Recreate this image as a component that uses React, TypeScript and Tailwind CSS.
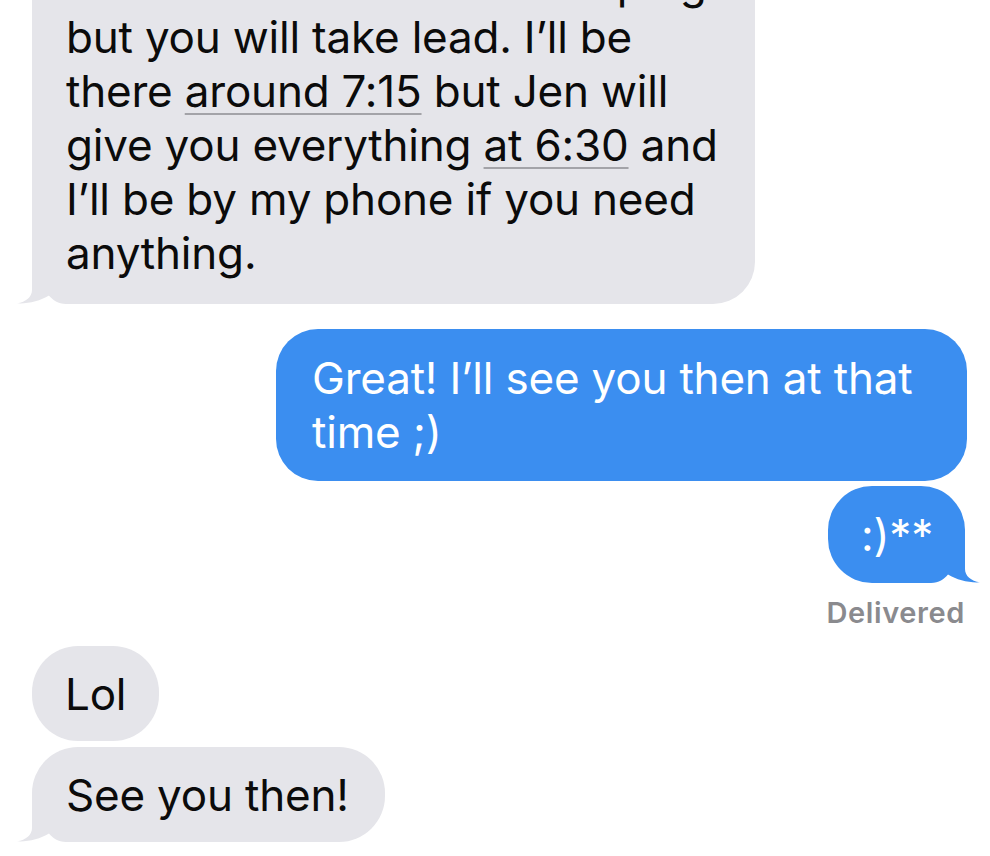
import React from 'react'

const GRAY = '#e5e5ea'
const BLUE = '#3b8ef0'

function Tail({ color, side }: { color: string; side: 'left' | 'right' }) {
  return (
    <svg
      width="64"
      height="48"
      viewBox="0 0 64 48"
      className={
        side === 'left'
          ? 'absolute left-[-16px] bottom-0'
          : 'absolute right-[-16px] bottom-0 scale-x-[-1]'
      }
    >
      <path
        d="M16 0 L16 34 C16 41 10 46 1 47.3 C12 48 24 45 33 39.5 C37 44 42 48 50 48 L64 48 L64 0 Z"
        fill={color}
      />
    </svg>
  )
}

function Link({ children }: { children: React.ReactNode }) {
  return (
    <span className="underline decoration-[#a3a3a8] decoration-[1.5px] underline-offset-[6px]">
      {children}
    </span>
  )
}

export default function App() {
  return (
    <div className="w-[990px] h-[856px] overflow-hidden bg-white font-['Inter','Liberation_Sans',sans-serif] text-[44px] leading-[54px] tracking-[-0.2px] text-[#0b0b0b]">
      <div className="flex flex-col">
        {/* incoming, long (scrolled partly out of view) */}
        <div className="relative self-start ml-[32px] mt-[-66px] w-[723px] rounded-[42px] bg-[#e5e5ea] pl-[34px] pt-[22px] pb-[24px] whitespace-nowrap">
          <Tail color={GRAY} side="left" />
          <span className="relative">
            So Jen and Tom will be helping
            <br />
            but you will take lead. I’ll be
            <br />
            there <Link>around 7:15</Link> but Jen will
            <br />
            give you everything <Link>at 6:30</Link> and
            <br />
            I’ll be by my phone if you need
            <br />
            anything.
          </span>
        </div>

        {/* outgoing */}
        <div className="self-end mr-[23px] mt-[25px] w-[691px] rounded-[42px] bg-[#3b8ef0] pl-[36px] py-[22px] text-white whitespace-nowrap">
          Great! I’ll see you then at that
          <br />
          time ;)
        </div>
        <div className="relative self-end mr-[25px] mt-[5px] rounded-[44px] bg-[#3b8ef0] pl-[33px] pr-[32px] py-[21.5px] text-white">
          <Tail color={BLUE} side="right" />
          <span className="relative">:)**</span>
        </div>
        <div className="self-end mr-[25px] mt-[14px] text-[29px] leading-[32px] font-semibold tracking-[0.6px] text-[#8a8a8e]">
          Delivered
        </div>

        {/* incoming, short */}
        <div className="self-start ml-[32px] mt-[17px] rounded-[46px] bg-[#e5e5ea] px-[33px] py-[20.5px]">
          Lol
        </div>
        <div className="relative self-start ml-[32px] mt-[6px] rounded-[46px] bg-[#e5e5ea] pl-[34px] pr-[36px] py-[20.5px]">
          <Tail color={GRAY} side="left" />
          <span className="relative">See you then!</span>
        </div>
      </div>
    </div>
  )
}
